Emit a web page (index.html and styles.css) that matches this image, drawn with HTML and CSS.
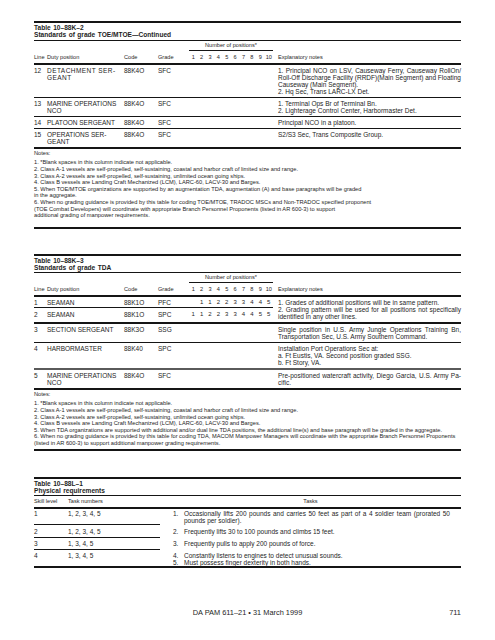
FILE: index.html
```html
<!DOCTYPE html>
<html lang="en">
<head>
<meta charset="utf-8">
<title>DA PAM 611–21 page 711</title>
<link rel="stylesheet" href="styles.css">
</head>
<body>
<div class="page">

  <section class="block b1">
    <div class="caption">Table 10–88K–2<br>Standards of grade TOE/MTOE—Continued</div>
    <table class="grade">
      <colgroup>
        <col class="c-line"><col class="c-duty"><col class="c-code"><col class="c-grade">
        <col class="c-n"><col class="c-n"><col class="c-n"><col class="c-n"><col class="c-n">
        <col class="c-n"><col class="c-n"><col class="c-n"><col class="c-n"><col class="c-n">
        <col class="c-gap"><col class="c-notes">
      </colgroup>
      <thead>
        <tr class="np-row"><th colspan="4"></th><th colspan="10" class="np">Number of positions*</th><th colspan="2"></th></tr>
        <tr class="hdr"><th>Line</th><th>Duty position</th><th>Code</th><th>Grade</th>
          <th class="n">1</th><th class="n">2</th><th class="n">3</th><th class="n">4</th><th class="n">5</th>
          <th class="n">6</th><th class="n">7</th><th class="n">8</th><th class="n">9</th><th class="n">10</th>
          <th></th><th>Explanatory notes</th></tr>
      </thead>
      <tbody>
        <tr><td>12</td><td><div class="duty wide">DETACHMENT SER&shy;GEANT</div></td><td>88K4O</td><td>SFC</td>
          <td></td><td></td><td></td><td></td><td></td><td></td><td></td><td></td><td></td><td></td><td></td>
          <td class="ex"><div>1. Principal NCO on LSV, Causeway Ferry, Causeway RollOn/<wbr>Roll-Off Discharge Facility (RRDF)(Main Segment) and Floating Causeway (Main Segment).</div><div>2. Hq Sec, Trans LARC-LX Det.</div></td></tr>
        <tr><td>13</td><td><div class="duty">MARINE OPERATIONS NCO</div></td><td>88K4O</td><td>SFC</td>
          <td></td><td></td><td></td><td></td><td></td><td></td><td></td><td></td><td></td><td></td><td></td>
          <td class="ex"><div>1. Terminal Ops Br of Terminal Bn.</div><div>2. Lighterage Control Center, Harbormaster Det.</div></td></tr>
        <tr><td>14</td><td><div class="duty">PLATOON SERGEANT</div></td><td>88K4O</td><td>SFC</td>
          <td></td><td></td><td></td><td></td><td></td><td></td><td></td><td></td><td></td><td></td><td></td>
          <td class="ex"><div>Principal NCO in a platoon.</div></td></tr>
        <tr class="last"><td>15</td><td><div class="duty">OPERATIONS SER&shy;GEANT</div></td><td>88K4O</td><td>SFC</td>
          <td></td><td></td><td></td><td></td><td></td><td></td><td></td><td></td><td></td><td></td><td></td>
          <td class="ex"><div>S2/S3 Sec, Trans Composite Group.</div></td></tr>
      </tbody>
    </table>
    <div class="notes n1">
      <div class="notes-label">Notes:</div>
      <div>1. *Blank spaces in this column indicate not applicable.</div>
      <div>2. Class A-1 vessels are self-propelled, self-sustaining, coastal and harbor craft of limited size and range.</div>
      <div>3. Class A-2 vessels are self-propelled, self-sustaining, unlimited ocean going ships.</div>
      <div>4. Class B vessels are Landing Craft Mechanized (LCM), LARC-60, LACV-30 and Barges.</div>
      <div>5. When TOE/MTOE organizations are supported by an augmentation TDA, augmentation (A) and base paragraphs will be graded<br>in the aggregate.</div>
      <div>6. When no grading guidance is provided by this table for coding TOE/MTOE, TRADOC MSCs and Non-TRADOC specified proponent<br>(TOE Combat Developers) will coordinate with appropriate Branch Personnel Proponents (listed in AR 600-3) to support<br>additional grading of manpower requirements.</div>
    </div>
  </section>

  <section class="block b2">
    <div class="caption">Table 10–88K–3<br>Standards of grade TDA</div>
    <table class="grade">
      <colgroup>
        <col class="c-line"><col class="c-duty"><col class="c-code"><col class="c-grade">
        <col class="c-n"><col class="c-n"><col class="c-n"><col class="c-n"><col class="c-n">
        <col class="c-n"><col class="c-n"><col class="c-n"><col class="c-n"><col class="c-n">
        <col class="c-gap"><col class="c-notes">
      </colgroup>
      <thead>
        <tr class="np-row"><th colspan="4"></th><th colspan="10" class="np">Number of positions*</th><th colspan="2"></th></tr>
        <tr class="hdr"><th>Line</th><th>Duty position</th><th>Code</th><th>Grade</th>
          <th class="n">1</th><th class="n">2</th><th class="n">3</th><th class="n">4</th><th class="n">5</th>
          <th class="n">6</th><th class="n">7</th><th class="n">8</th><th class="n">9</th><th class="n">10</th>
          <th></th><th>Explanatory notes</th></tr>
      </thead>
      <tbody>
        <tr class="r-a"><td>1</td><td><div class="duty">SEAMAN</div></td><td>88K1O</td><td>PFC</td>
          <td class="n"></td><td class="n">1</td><td class="n">1</td><td class="n">2</td><td class="n">2</td>
          <td class="n">3</td><td class="n">3</td><td class="n">4</td><td class="n">4</td><td class="n">5</td>
          <td rowspan="2" class="gap-span"></td>
          <td rowspan="2" class="ex ex-span"><div>1. Grades of additional positions will be in same pattern.</div><div>2. Grading pattern will be used for all positions not specifically identified in any other lines.</div></td></tr>
        <tr class="r-b"><td>2</td><td><div class="duty">SEAMAN</div></td><td>88K1O</td><td>SPC</td>
          <td class="n">1</td><td class="n">1</td><td class="n">2</td><td class="n">2</td><td class="n">3</td>
          <td class="n">3</td><td class="n">4</td><td class="n">4</td><td class="n">5</td><td class="n">5</td></tr>
        <tr><td>3</td><td><div class="duty">SECTION SERGEANT</div></td><td>88K3O</td><td>SSG</td>
          <td></td><td></td><td></td><td></td><td></td><td></td><td></td><td></td><td></td><td></td><td></td>
          <td class="ex"><div>Single position in U.S. Army Jungle Operations Training Bn, Transportation Sec, U.S. Army Southern Command.</div></td></tr>
        <tr class="r-dbl"><td>4</td><td><div class="duty">HARBORMASTER</div></td><td>88K40</td><td>SPC</td>
          <td></td><td></td><td></td><td></td><td></td><td></td><td></td><td></td><td></td><td></td><td></td>
          <td class="ex"><div>Installation Port Operations Sec at:</div><div>a. Ft Eustis, VA. Second position graded SSG.</div><div>b. Ft Story, VA.</div></td></tr>
        <tr class="last"><td>5</td><td><div class="duty">MARINE OPERATIONS NCO</div></td><td>88K4O</td><td>SFC</td>
          <td></td><td></td><td></td><td></td><td></td><td></td><td></td><td></td><td></td><td></td><td></td>
          <td class="ex"><div>Pre-positioned watercraft activity, Diego Garcia, U.S. Army Pa&shy;cific.</div></td></tr>
      </tbody>
    </table>
    <div class="notes n2">
      <div class="notes-label">Notes:</div>
      <div>1. *Blank spaces in this column indicate not applicable.</div>
      <div>2. Class A-1 vessels are self-propelled, self-sustaining, coastal and harbor craft of limited size and range.</div>
      <div>3. Class A-2 vessels are self-propelled, self-sustaining, unlimited ocean going ships.</div>
      <div>4. Class B vessels are Landing Craft Mechanized (LCM), LARC-60, LACV-30 and Barges.</div>
      <div>5. When TDA organizations are supported with additional and/or dual line TDA positions, the additional line(s) and base paragraph will be graded in the aggregate.</div>
      <div>6. When no grading guidance is provided by this table for coding TDA, MACOM Manpower Managers will coordinate with the appropriate Branch Personnel Proponents (listed in AR 600-3) to support additional manpower grading requirements.</div>
    </div>
  </section>

  <section class="block b3">
    <div class="caption">Table 10–88L–1<br>Physical requirements</div>
    <table class="phys">
      <colgroup><col class="c-skill"><col class="c-tasknum"><col class="c-tasks"></colgroup>
      <thead>
        <tr class="hdr"><th>Skill level</th><th>Task numbers</th><th class="center">Tasks</th></tr>
      </thead>
      <tbody>
        <tr class="p1"><td>1</td><td>1, 2, 3, 4, 5</td>
          <td class="tasks"><div class="task"><span>1.</span><span>Occasionally lifts 200 pounds and carries 50 feet as part of a 4 soldier team (prorated 50 pounds per soldier).</span></div></td></tr>
        <tr class="p2"><td>2</td><td>1, 2, 3, 4, 5</td>
          <td class="tasks"><div class="task"><span>2.</span><span>Frequently lifts 30 to 100 pounds and climbs 15 feet.</span></div></td></tr>
        <tr class="p3"><td>3</td><td>1, 3, 4, 5</td>
          <td class="tasks"><div class="task"><span>3.</span><span>Frequently pulls to apply 200 pounds of force.</span></div></td></tr>
        <tr class="p4"><td>4</td><td>1, 3, 4, 5</td>
          <td class="tasks"><div class="task"><span>4.</span><span>Constantly listens to engines to detect unusual sounds.</span></div><div class="task"><span>5.</span><span>Must possess finger dexterity in both hands.</span></div></td></tr>
      </tbody>
    </table>
  </section>

  <footer class="footer">
    <span></span>
    <span class="f-center">DA PAM 611–21 • 31 March 1999</span>
    <span class="f-right">711</span>
  </footer>
</div>
</body>
</html>
```

FILE: styles.css
```css
* { box-sizing: border-box; }

body {
  margin: 0;
  background: #ffffff;
  color: #1e1e1e;
  font-family: "Liberation Sans", Arial, sans-serif;
}

.page {
  width: 495px;
  padding: 21px 34px 0;
}

.block {
  border-top: 2px solid #151515;
  border-bottom: 2px solid #151515;
}
.b2 { margin-top: 25px; }
.b3 { margin-top: 26px; }

.caption {
  font-weight: bold;
  font-size: 6.6px;
  line-height: 7px;
  word-spacing: 0.6px;
  padding: 1px 0 1.5px;
  border-bottom: 1px solid #151515;
}

table {
  width: 427px;
  table-layout: fixed;
  border-collapse: separate;
  border-spacing: 0;
}
th, td {
  padding: 0;
  text-align: left;
  vertical-align: top;
  font-weight: normal;
}

/* grade tables */
.c-line { width: 13px; }
.c-duty { width: 77px; }
.c-code { width: 34px; }
.c-grade { width: 31px; }
.c-n { width: 8.4px; }
.c-gap { width: 5px; }
.c-notes { width: 183px; }

.grade thead th {
  font-size: 5.6px;
  line-height: 6.6px;
}
.np-row th { padding: 1px 0 1.5px; }
.grade .np {
  text-align: center;
  border-bottom: 1px solid #151515;
}
.hdr th {
  padding: 3px 0 2.5px;
  border-bottom: 2px solid #151515;
  white-space: nowrap;
}
.hdr th.n { text-align: center; }

.grade tbody td {
  font-size: 6.5px;
  line-height: 7px;
  padding: 2px 0;
  border-bottom: 1px solid #151515;
}
.grade tbody td.n {
  text-align: center;
  font-size: 6px;
}
.grade tbody tr.last td { border-bottom: 2px solid #151515; }
.grade tbody tr.r-dbl td { border-bottom: 2px solid #5a5a5a; }

.duty { margin-right: 5px; }
.duty.wide { letter-spacing: 0.45px; }
.ex { text-align: justify; }

.grade tbody tr.r-a td { padding: 1.5px 0; }
.grade tbody tr.r-b td { padding: 3px 0 3.3px; border-bottom: 2px solid #151515; }
.grade tbody td.gap-span,
.grade tbody td.ex-span {
  padding: 1.5px 0 0;
  border-bottom: 2px solid #151515;
}

.notes {
  font-size: 5.7px;
  line-height: 6.6px;
  padding-top: 1.7px;
}
.notes-label { margin-bottom: 2.4px; }
.n1 { padding-bottom: 8px; }
.n2 { padding-bottom: 2px; }

/* physical requirements */
.c-skill { width: 34px; }
.c-tasknum { width: 92px; }
.c-tasks { width: 301px; }

.phys thead th {
  font-size: 5.6px;
  line-height: 6.6px;
  padding: 1.5px 0 2.5px;
}
.phys th.center { text-align: center; }

.phys tbody td {
  font-size: 6.5px;
  line-height: 7px;
  border-bottom: 1px solid #151515;
}
.phys tbody td.tasks { border-bottom: none; }
.phys tbody tr.p4 td { border-bottom: none; }
.phys .p1 td { padding: 1px 0 1.5px; }
.phys .p2 td { padding: 3px 0 1.5px; }
.phys .p3 td { padding: 2.7px 0 1.5px; }
.phys .p4 td { padding: 2px 0 0.5px; }

.task {
  display: grid;
  grid-template-columns: 11px 1fr;
  padding: 0 11px 0 13px;
  text-align: justify;
}

.footer {
  display: grid;
  grid-template-columns: 1fr auto 1fr;
  margin-top: 39.7px;
  font-size: 7.4px;
  line-height: 9px;
}
.f-right { text-align: right; }
```
